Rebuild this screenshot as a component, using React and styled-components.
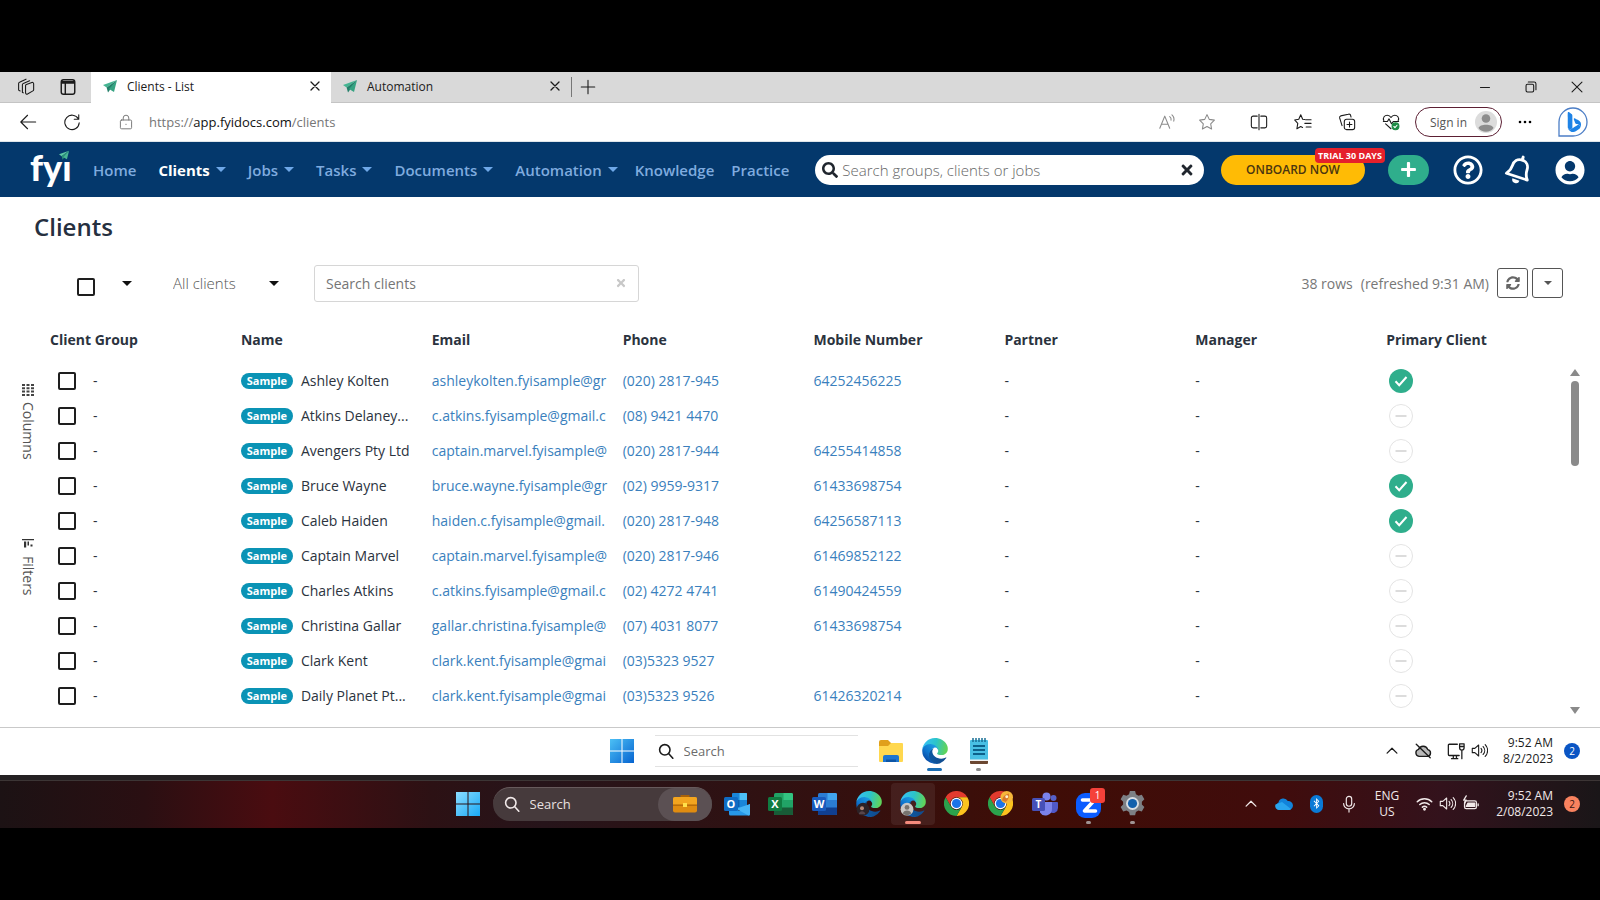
import React from "react";
import styled, { createGlobalStyle, css } from "styled-components";
import { FaSearch, FaTimes, FaPlus, FaRegQuestionCircle, FaUserCircle, FaSyncAlt, FaBluetoothB } from "react-icons/fa";
import { BsBing } from "react-icons/bs";

const Global = createGlobalStyle`
  *, *::before, *::after { box-sizing: border-box; }
  body { margin: 0; background: #000; font-family: "Open Sans", "Noto Sans", sans-serif; font-size: 14px; color: #2b333e; }
  button, input, select { font: inherit; color: inherit; margin: 0; }
  button { background: none; border: 0; padding: 0; cursor: pointer; }
  a { text-decoration: none; color: inherit; }
  svg { display: block; flex: none; }
`;

/* ---------- frame ---------- */
const Frame = styled.div`
  min-height: 100vh;
  padding: 72px 0;
  display: flex;
  flex-direction: column;
  background: #000;
`;

/* ---------- browser chrome ---------- */
const TabStrip = styled.div`
  display: flex;
  height: 31px;
  background: #d9d9d9;
  color: #1b1b1b;
`;
const TabTools = styled.div`
  width: 91px;
  display: flex;
  align-items: center;
  gap: 24px;
  padding-left: 17px;
  border-bottom: 1px solid #c4c4c4;
`;
const Tab = styled.div`
  width: 240px;
  display: flex;
  align-items: center;
  padding: 0 10px 2px 12px;
  font-size: 12px;
  background: ${(p) => (p.$active ? "#fff" : "transparent")};
  border-bottom: 1px solid ${(p) => (p.$active ? "#fff" : "#c4c4c4")};
`;
const TabLabel = styled.button`
  flex: 1;
  display: flex;
  align-items: center;
  gap: 10px;
  text-align: left;
`;
const StripRest = styled.div`
  flex: 1;
  display: flex;
  align-items: center;
  justify-content: space-between;
  border-bottom: 1px solid #c4c4c4;
  padding-right: 14px;
`;
const NewTab = styled.div`
  display: flex;
  align-items: center;
  height: 20px;
  padding-left: 7px;
  border-left: 1px solid #777;
`;
const WindowButtons = styled.div`
  display: flex;
  gap: 28px;
`;
const IconButton = styled.button`
  display: flex;
  align-items: center;
  justify-content: center;
  width: ${(p) => p.$size || 18}px;
  height: ${(p) => p.$size || 18}px;
  color: ${(p) => p.$color || "inherit"};
`;
const AddressBar = styled.div`
  display: flex;
  align-items: center;
  height: 39px;
  padding: 0 12px 0 18px;
  background: #fff;
  color: #1b1b1b;
  border-bottom: 1px solid #dfe5ea;
`;
const NavTools = styled.div`
  display: flex;
  gap: 24px;
`;
const Address = styled.div`
  flex: 1;
  display: flex;
  align-items: center;
  gap: 15px;
  padding-left: 36px;
  font-size: 13px;
  color: #767676;
  b { font-weight: 400; color: #111; }
`;
const PageTools = styled.div`
  display: flex;
  gap: 20px;
  margin-right: 32px;
  color: #8a8a8a;
`;
const BrowserTools = styled.div`
  display: flex;
  align-items: center;
  gap: 24px;
`;
const SignIn = styled.button`
  display: flex;
  align-items: center;
  justify-content: space-between;
  width: 87px;
  height: 30px;
  margin: 0 -10px;
  padding: 0 4px 0 14px;
  border: 1px solid #5c1f33;
  border-radius: 15px;
  font-size: 12px;
  color: #555;
`;

/* ---------- app bar ---------- */
const AppBar = styled.header`
  display: flex;
  align-items: center;
  height: 55px;
  padding: 0 15px 0 30px;
  background: #04386c;
  color: #8cb8ea;
`;
const Menu = styled.nav`
  display: flex;
  align-items: center;
  gap: 17px;
  padding-left: 19px;
`;
const MenuLink = styled.a`
  display: flex;
  align-items: center;
  gap: 6px;
  margin-left: ${(p) => (p.$drop ? 5 : 0)}px;
  font-size: 15px;
  font-weight: ${(p) => (p.$active ? 700 : 600)};
  color: ${(p) => (p.$active ? "#fff" : "#7fabdf")};
`;
const Caret = styled.i`
  display: block;
  width: 0;
  height: 0;
  border: ${(p) => p.$size || 5}px solid transparent;
  border-bottom-width: 0;
  border-top-color: ${(p) => p.$color || "#6fa8e8"};
`;
const GlobalSearch = styled.label`
  flex: 1;
  display: flex;
  align-items: center;
  gap: 4px;
  height: 30px;
  margin-left: 26px;
  padding: 0 9px 0 7px;
  border-radius: 15px;
  background: #fff;
  color: #20262e;
  input {
    flex: 1;
    min-width: 0;
    padding: 0;
    border: 0;
    outline: 0;
    background: none;
    font-size: 15px;
    font-weight: 300;
  }
  input::placeholder { color: #666; opacity: 1; }
`;
const OnboardWrap = styled.div`
  position: relative;
  margin: 0 23px 0 17px;
`;
const Onboard = styled.button`
  width: 144px;
  height: 30px;
  border-radius: 15px;
  background: #ffbb05;
  font-size: 12px;
  font-weight: 600;
  color: #4a3510;
`;
const Trial = styled.span`
  position: absolute;
  right: -20px;
  top: -7px;
  width: 70px;
  height: 15px;
  border-radius: 4px;
  background: #e5202b;
  color: #fff;
  font-size: 9px;
  font-weight: 700;
  line-height: 15px;
  text-align: center;
  white-space: nowrap;
`;
const AddButton = styled.button`
  display: flex;
  align-items: center;
  justify-content: center;
  width: 41px;
  height: 30px;
  margin-right: 24px;
  border-radius: 15px;
  background: #2fae8c;
  color: #fff;
`;
const AppIcons = styled.div`
  display: flex;
  gap: 21px;
`;

/* ---------- page ---------- */
const Page = styled.main`
  flex: 1;
  display: flex;
  flex-direction: column;
  background: #fff;
  border-bottom: 1px solid #c9c9c9;
`;
const Title = styled.h1`
  margin: 0;
  padding: 14px 34px 0;
  font-size: 24px;
  line-height: 32px;
  font-weight: 600;
  color: #263040;
`;
const Toolbar = styled.div`
  display: flex;
  align-items: center;
  height: 38px;
  margin-top: 21px;
  padding: 0 37px 0 77px;
`;
const Check = styled.input.attrs({ type: "checkbox" })`
  appearance: none;
  width: 18px;
  height: 18px;
  border: 2px solid #1e1e1e;
  border-radius: 2px;
  background: #fff;
  flex: none;
  ${(p) => p.$low && css`margin-top: 8px;`}
`;
const SelectMore = styled.button`
  padding: 8px 4px;
  margin: 0 37px 0 23px;
`;
const ViewPicker = styled.label`
  display: flex;
  align-items: center;
  width: 141px;
  select {
    width: 96px;
    appearance: none;
    border: 0;
    padding: 0;
    background: none;
    font-size: 15px;
    font-weight: 300;
    color: #555;
  }
`;
const FilterBox = styled.label`
  display: flex;
  align-items: center;
  width: 325px;
  height: 37px;
  padding: 0 11px;
  border: 1px solid #d6d6d6;
  border-radius: 3px;
  input { flex: 1; min-width: 0; border: 0; outline: 0; padding: 0; background: none; }
  input::placeholder { color: #757575; opacity: 1; }
`;
const Status = styled.div`
  flex: 1;
  display: flex;
  align-items: center;
  justify-content: flex-end;
  gap: 8px;
  color: #777;
`;
const BoxButton = styled.button`
  display: flex;
  align-items: center;
  justify-content: center;
  width: 31px;
  height: 30px;
  border: 1px solid #555;
  border-radius: 3px;
  color: #666;
  & + & { margin-left: -4px; }
`;
const Body = styled.div`
  flex: 1;
  display: flex;
  padding: 13px 19px 13px 0;
`;
const Side = styled.aside`
  width: 42px;
  display: flex;
  flex-direction: column;
  gap: 78px;
  padding: 69px 0 0 18px;
`;
const SideTab = styled.button`
  display: flex;
  flex-direction: column;
  align-items: center;
  gap: 6px;
  width: 20px;
  color: #555;
  span { writing-mode: vertical-rl; line-height: 20px; font-size: 14px; }
`;
const Table = styled.table`
  flex: 1;
  width: 100%;
  table-layout: fixed;
  border-collapse: collapse;
  align-self: flex-start;
`;
const Th = styled.th`
  height: 48px;
  padding: 0 8px;
  text-align: left;
  font-weight: 700;
  color: #2b333e;
`;
const Td = styled.td`
  height: 35px;
  padding: 0 8px;
  overflow: hidden;
  white-space: nowrap;
  a { color: #3a7fbd; }
`;
const CellFlow = styled.div`
  display: flex;
  align-items: center;
  gap: ${(p) => p.$gap || 8}px;
  padding-left: ${(p) => p.$inset || 0}px;
`;
const Tag = styled.span`
  width: 52px;
  height: 16px;
  border-radius: 8px;
  background: #0a93b5;
  color: #fff;
  font-size: 11px;
  font-weight: 700;
  line-height: 15px;
  text-align: center;
  flex: none;
`;
const Scroller = styled.div`
  width: 12px;
  display: flex;
  flex-direction: column;
  align-items: center;
  justify-content: space-between;
  padding-top: 54px;
`;
const Thumb = styled.div`
  width: 8px;
  height: 85px;
  margin: 4px auto 0;
  border-radius: 4px;
  background: #8a8a8a;
`;

/* ---------- taskbars ---------- */
const Taskbar = styled.footer`
  display: grid;
  grid-template-columns: 1fr auto 1fr;
  align-items: center;
  height: 47px;
  padding-bottom: 2px;
  background: #fff;
  color: #1b1b1b;
  ${(p) =>
    p.$dark &&
    css`
      height: 48px;
      border-top: 1px solid #3c3535;
      color: #f1e9e9;
      background: linear-gradient(90deg, #1c1214 0%, #2a0f12 9%, #4a0c10 17%, #2c1114 27%, #26141a 34%, #33100f 52%, #3f0d06 65%, #400c0c 80%, #33121c 90%, #1a1618 100%);
    `}
`;
const Divider = styled.div`
  height: 5px;
  background: #242122;
`;
const Apps = styled.div`
  display: flex;
  align-items: center;
  grid-column: 2;
`;
const App_ = styled.button`
  position: relative;
  display: flex;
  align-items: center;
  justify-content: center;
  width: 44px;
  height: 42px;
  ${(p) => p.$lit && css`background: #ffffff12; border-radius: 4px;`}
  &::after {
    content: "";
    display: ${(p) => (p.$mark ? "block" : "none")};
    position: absolute;
    bottom: 1px;
    width: ${(p) => p.$markWidth || 5}px;
    height: 3px;
    border-radius: 2px;
    background: ${(p) => p.$mark};
  }
`;
const TaskSearch = styled.label`
  display: flex;
  align-items: center;
  gap: 10px;
  width: 203px;
  height: 32px;
  margin: 0 11px 0 11px;
  border: 1px solid #e2e2e2;
  border-width: 1px 0;
  padding-left: 3px;
  input { flex: 1; min-width: 0; border: 0; padding: 0; outline: 0; background: none; font-size: 13px; }
  input::placeholder { color: #6b6b6b; opacity: 1; }
  ${(p) =>
    p.$dark &&
    css`
      width: 219px;
      height: 34px;
      margin: 0 3px;
      padding: 0 0 0 11px;
      border: 0;
      border-top: 1px solid #675a5c;
      border-radius: 17px;
      background: #463a3c;
      input::placeholder { color: #e8e0e0; }
    `}
`;
const Bag = styled.span`
  display: flex;
  align-items: center;
  justify-content: center;
  width: 54px;
  height: 33px;
  border-radius: 17px;
  background: #5b5053;
`;
const Tray = styled.div`
  display: flex;
  align-items: center;
  justify-content: flex-end;
  gap: ${(p) => p.$gap}px;
  padding-right: 20px;
`;
const TrayGroup = styled.div`
  display: flex;
  align-items: center;
  gap: ${(p) => p.$gap || 6}px;
`;
const Clock = styled.div`
  font-size: 12px;
  line-height: 16px;
  text-align: ${(p) => p.$align || "right"};
`;
const Count = styled.span`
  width: 16px;
  height: 16px;
  border-radius: 8px;
  background: ${(p) => p.$bg};
  color: ${(p) => p.$fg};
  font-size: 10px;
  line-height: 16px;
  text-align: center;
`;

/* ---------- drawings ---------- */
const Line = ({ size = 18, w = 1.2, children, box = 20 }) => (
  <svg width={size} height={size} viewBox={`0 0 ${box} ${box}`} fill="none" stroke="currentColor" strokeWidth={w} strokeLinecap="round" strokeLinejoin="round">
    {children}
  </svg>
);
const Plane = ({ size = 14 }) => (
  <svg width={size} height={size} viewBox="0 0 14 14">
    <path d="M14 1 0 6l3.600 2.600L14 1z" fill="#45b592" />
    <path d="M14 1 3.600 8.400 5 13.500l2.200-3L14 1z" fill="#237f69" />
    <path d="M14 1 6 10l5 3L14 1z" fill="#36a382" />
  </svg>
);
const Close = ({ size = 12 }) => (
  <Line size={size} box={12} w={1.3}><path d="M2 2l8 8M10 2l-8 8" /></Line>
);
const Logo = () => (
  <svg width="44" height="52" viewBox="0 0 44 52" role="img" aria-label="fyi">
    <text x="0" y="37" fill="#fff" fontFamily="Lato, sans-serif" fontWeight="900" fontSize="36">fyı</text>
    <g transform="translate(29 6) scale(.72)">
      <path d="M14 1 0 6l3.600 2.600L14 1z" fill="#5fc7a4" />
      <path d="M14 1 3.600 8.400 5 13.500l2.200-3L14 1z" fill="#2a8f78" />
      <path d="M14 1 6 10l5 3L14 1z" fill="#49b594" />
    </g>
  </svg>
);
const Bell = () => (
  <svg width="30" height="30" viewBox="0 0 30 30" fill="none">
    <g transform="rotate(18 15 15)">
      <path d="M15 4.500c-5 0-7.600 3.600-7.600 8 0 5.600-1.800 7.300-3.400 9.500h22c-1.600-2.200-3.400-3.900-3.400-9.500 0-4.400-2.600-8-7.600-8z" stroke="#fff" strokeWidth="2.800" strokeLinejoin="round" />
      <path d="M15 1.500v3" stroke="#fff" strokeWidth="3" strokeLinecap="round" />
      <path d="M11.300 25h7.400a3.700 3.700 0 0 1-7.400 0z" fill="#fff" />
    </g>
  </svg>
);
const Windows = ({ dark }) => (
  <svg width="24" height="24" viewBox="0 0 24 24">
    <defs>
      <linearGradient id={dark ? "wd" : "wl"} x1="0" y1="0" x2="24" y2="24" gradientUnits="userSpaceOnUse">
        <stop offset="0" stopColor={dark ? "#8bdcff" : "#4cc0f5"} />
        <stop offset="1" stopColor={dark ? "#19a9f5" : "#0663d0"} />
      </linearGradient>
    </defs>
    <path d="M0 0h11.500v11.500H0zM12.500 0H24v11.500H12.500zM0 12.500h11.500V24H0zM12.500 12.500H24V24H12.500z" fill={`url(#${dark ? "wd" : "wl"})`} />
  </svg>
);
const Edge = ({ avatar }) => (
  <svg width="26" height="26" viewBox="0 0 256 260">
    <defs>
      <linearGradient id="ea" x1="63" y1="178" x2="241" y2="178" gradientUnits="userSpaceOnUse"><stop offset="0" stopColor="#0c59a4" /><stop offset="1" stopColor="#114a8b" /></linearGradient>
      <linearGradient id="eb" x1="158" y1="100" x2="46" y2="222" gradientUnits="userSpaceOnUse"><stop offset="0" stopColor="#1b9de2" /><stop offset=".6" stopColor="#0f76cf" /><stop offset="1" stopColor="#0a4fa8" /></linearGradient>
      <linearGradient id="ec" x1="20" y1="60" x2="240" y2="110" gradientUnits="userSpaceOnUse"><stop offset="0" stopColor="#35c1f1" /><stop offset=".5" stopColor="#2cc4c9" /><stop offset="1" stopColor="#5fd35b" /></linearGradient>
    </defs>
    <path fill="url(#ea)" d="M235.680 195.460a93.730 93.730 0 0 1-10.540 4.710 101.870 101.870 0 0 1-35.900 6.460c-47.320 0-88.540-32.550-88.540-74.320A31.480 31.480 0 0 1 117.130 105c-42.800 1.800-53.800 46.400-53.800 72.530 0 73.880 68.090 81.370 82.760 81.370 7.910 0 19.840-2.300 27-4.560l1.310-.44a128.340 128.340 0 0 0 66.600-52.800 4 4 0 0 0-5.320-5.640z" />
    <path fill="url(#eb)" d="M105.730 241.420a79.200 79.200 0 0 1-22.740-21.340 80.720 80.720 0 0 1 29.530-120c3.120-1.470 8.450-4.130 15.540-4a32.350 32.350 0 0 1 25.690 13 31.880 31.880 0 0 1 6.360 18.660c0-.21 24.460-79.600-80-79.600-43.900 0-80 41.660-80 78.210a130.150 130.150 0 0 0 12.110 56 128 128 0 0 0 156.380 67.110 75.550 75.550 0 0 1-62.780-8z" />
    <path fill="url(#ec)" d="M152.330 148.860c-.81 1.050-3.300 2.500-3.300 5.660 0 2.610 1.700 5.120 4.720 7.230 14.380 10 41.490 8.680 41.560 8.680a59.560 59.560 0 0 0 30.270-8.350 61.380 61.380 0 0 0 30.430-52.880c.26-22.410-8-37.310-11.340-43.910C223.460 23.840 177.720 0 128 0A128 128 0 0 0 0 126.200c.48-36.540 36.800-66.050 80-66.050 3.500 0 23.460.34 42 10.070 16.340 8.580 24.900 18.940 30.850 29.210 6.180 10.670 7.280 24.150 7.280 29.520 0 5.370-2.740 13.330-7.800 19.910z" />
    {avatar === "photo" && (
      <g><circle cx="68" cy="182" r="64" fill="#2c2226" /><circle cx="58" cy="172" r="20" fill="#b58a78" /><path d="M26 232c4-40 60-40 66 0z" fill="#57454b" /></g>
    )}
    {avatar === "person" && (
      <g><circle cx="68" cy="182" r="64" fill="#c9c6c4" /><circle cx="68" cy="164" r="24" fill="#77736f" /><path d="M26 226c6-42 78-42 84 0a64 64 0 0 1-84 0z" fill="#77736f" /></g>
    )}
  </svg>
);
const Chrome = ({ avatar }) => (
  <svg width="25" height="25" viewBox="0 0 24 24">
    <path fill="#e33b2e" d="M12 6h10.400A12 12 0 0 0 1.600 6l5.200 9A6 6 0 0 1 12 6z" />
    <path fill="#fcc31e" d="M22.400 6H12a6 6 0 0 1 5.200 9L12 24A12 12 0 0 0 22.400 6z" />
    <path fill="#2ba24c" d="M17.200 15a6 6 0 0 1-10.400 0L1.600 6A12 12 0 0 0 12 24z" />
    <circle cx="12" cy="12" r="5.600" fill="#fff" />
    <circle cx="12" cy="12" r="4.400" fill="#1a73e8" />
    {avatar && (
      <g><circle cx="18" cy="6" r="6" fill="#f6b73a" /><path d="M13.500 9c1-4 3-5.500 6.500-6.500.5 3-.5 6.500-3 8z" fill="#d8792b" /><circle cx="18" cy="5.500" r="1.400" fill="#fff3d0" /></g>
    )}
  </svg>
);
const Office = ({ letter, light, mid, deep, plate }) => (
  <svg width="26" height="24" viewBox="0 0 26 24">
    <rect x="6" y="1" width="19" height="22" rx="1.500" fill={mid} />
    <path d="M15.500 1H23.500a1.500 1.500 0 0 1 1.500 1.500V8h-9.500z" fill={light} />
    <path d="M6 15.500h19v6a1.500 1.500 0 0 1-1.500 1.500h-16A1.500 1.500 0 0 1 6 21.500z" fill={deep} />
    <rect x="0" y="5" width="14" height="14" rx="1.500" fill={plate} />
    <text x="7" y="16" textAnchor="middle" fontFamily="Open Sans, sans-serif" fontWeight="700" fontSize="11" fill="#fff">{letter}</text>
  </svg>
);
const Outlook = () => (
  <svg width="26" height="24" viewBox="0 0 26 24">
    <rect x="8" y="1" width="15" height="15" rx="1" fill="#1a86d9" />
    <path d="M15.500 1H22a1 1 0 0 1 1 1v6h-7.500z" fill="#4cc0f7" />
    <path d="M8 8h7.500v7H8z" fill="#0d5fb0" />
    <path d="M5 13l10.500 6L26 12v10a1.500 1.500 0 0 1-1.500 1.500h-18A1.500 1.500 0 0 1 5 22z" fill="#2798e8" />
    <path d="M26 12v10a1.500 1.500 0 0 1-1.500 1.500L12 16.800z" fill="#46b4f5" />
    <rect x="0" y="5" width="14" height="14" rx="1.500" fill="#0f6cc4" />
    <text x="7" y="16" textAnchor="middle" fontFamily="Open Sans, sans-serif" fontWeight="700" fontSize="11" fill="#fff">O</text>
  </svg>
);
const Teams = () => (
  <svg width="26" height="24" viewBox="0 0 26 24">
    <circle cx="21.500" cy="6" r="3" fill="#5660c8" />
    <circle cx="14.500" cy="4.500" r="4" fill="#7b83eb" />
    <path d="M17 10h8a1 1 0 0 1 1 1v5a5 5 0 0 1-8 4z" fill="#5059c9" />
    <path d="M8 10h12v7a6.500 6.500 0 0 1-12 3.500z" fill="#7b83eb" />
    <rect x="0" y="6" width="13" height="13" rx="1.500" fill="#4650b8" />
    <text x="6.500" y="16" textAnchor="middle" fontFamily="Open Sans, sans-serif" fontWeight="700" fontSize="10" fill="#fff">T</text>
  </svg>
);
const Zoom = () => (
  <svg width="32" height="32" viewBox="0 0 32 32">
    <rect x="3" y="5" width="25" height="25" rx="9" fill="#0b5cff" />
    <path d="M9.500 12h12l-10 11h11" fill="none" stroke="#fff" strokeWidth="3.600" strokeLinejoin="round" strokeLinecap="round" />
    <rect x="17" y="0" width="15" height="15" rx="3" fill="#f5413a" />
    <text x="24.500" y="11" textAnchor="middle" fontFamily="Open Sans, sans-serif" fontSize="10" fill="#fff">1</text>
  </svg>
);
const Gear = () => (
  <svg width="25" height="25" viewBox="0 0 24 24">
    <path fill="#7d8085" d="M9.500 0h5l.8 3.200 2.400 1.400 3.200-1 2.500 4.300-2.400 2.300v2.800l2.400 2.300-2.500 4.300-3.200-.9-2.400 1.400-.8 3.200h-5l-.8-3.200-2.400-1.400-3.200.9L.6 15.300 3 13v-2.800L.6 7.900l2.500-4.300 3.200 1 2.400-1.400z" />
    <circle cx="12" cy="12" r="6.200" fill="#d8dde3" />
    <circle cx="12" cy="12" r="4.400" fill="#1260ac" />
  </svg>
);
const Folder = () => (
  <svg width="26" height="24" viewBox="0 0 26 24">
    <path d="M1 3a2 2 0 0 1 2-2h7l3 3v6H1z" fill="#e0a01b" />
    <path d="M1 7h9l3-3h11a1 1 0 0 1 1 1v17a1 1 0 0 1-1 1H2a1 1 0 0 1-1-1z" fill="#ffd84f" />
    <path d="M5 23v-5a2 2 0 0 1 2-2h12a2 2 0 0 1 2 2v5z" fill="#1c75d0" />
    <path d="M8 20.500h10V23H8z" fill="#0d55a5" />
  </svg>
);
const Notepad = () => (
  <svg width="20" height="26" viewBox="0 0 20 26">
    <rect x="1" y="2" width="18" height="22" rx="1" fill="#48bfe4" />
    <path d="M1 22.500h18V25a1 1 0 0 1-1 1H2a1 1 0 0 1-1-1z" fill="#6b4731" />
    <path d="M1 21.500h18v1.500H1z" fill="#f1f1f1" />
    <path d="M4 0v4M7 0v4M10 0v4M13 0v4M16 0v4" stroke="#176f95" strokeWidth="1.500" />
    <path d="M4 8h12M4 12h12M4 16h12" stroke="#0c608a" strokeWidth="1.800" />
  </svg>
);
const Briefcase = () => (
  <svg width="24" height="18" viewBox="0 0 24 18">
    <path d="M8.500 3V1h7v2" fill="none" stroke="#a96209" strokeWidth="2" />
    <rect x="0" y="2" width="24" height="15.500" rx="2" fill="#e08c10" />
    <path d="M0 4a2 2 0 0 1 2-2h20a2 2 0 0 1 2 2v5.500H0z" fill="#f3a51f" />
    <path d="M0 9.500h24v1.500H0z" fill="#b96d08" />
    <rect x="10" y="8" width="4" height="4" fill="#ffe04a" />
  </svg>
);
const Speaker = () => (
  <Line size={17} w={1.3}><path d="M1.500 7.500v5h3L9 16.500v-13L4.500 7.500zM11.800 7.500a4 4 0 0 1 0 5M14.300 5.300a7 7 0 0 1 0 9.400M16.700 3a10 10 0 0 1 0 14" /></Line>
);
const ChevronUp = () => <Line size={14} w={1.8}><path d="M3 13l7-7 7 7" /></Line>;
const Magnifier = () => <Line size={16} w={2}><circle cx="8.500" cy="8.500" r="6.500" /><path d="M13.500 13.500L18.500 19" /></Line>;
const StarPath = "M10 1.800l2.500 5.300 5.700.8-4.100 4.100 1 5.800-5.100-2.800-5.100 2.800 1-5.800L1.800 7.900l5.700-.8z";

const Ticked = () => (
  <svg width="24" height="24" viewBox="0 0 24 24" role="img" aria-label="Primary">
    <circle cx="12" cy="12" r="12" fill="#2fae8c" />
    <path d="M6.500 12.300l3.700 3.900L17.500 8" fill="none" stroke="#fff" strokeWidth="2" />
  </svg>
);
const Unticked = () => (
  <svg width="24" height="24" viewBox="0 0 24 24" role="img" aria-label="Not primary">
    <circle cx="12" cy="12" r="11.500" fill="#fff" stroke="#e4e4e4" />
    <path d="M6.500 12h11" stroke="#d0d0d0" strokeWidth="1.500" />
  </svg>
);

/* ---------- data ---------- */
const menu = [
  ["Home", false],
  ["Clients", true],
  ["Jobs", true],
  ["Tasks", true],
  ["Documents", true],
  ["Automation", true],
  ["Knowledge", false],
  ["Practice", false],
];
const columns = ["Client Group", "Name", "Email", "Phone", "Mobile Number", "Partner", "Manager", "Primary Client"];
const clients = [
  ["Ashley Kolten", "ashleykolten.fyisample@gr", "(020) 2817-945", "64252456225", true],
  ["Atkins Delaney...", "c.atkins.fyisample@gmail.c", "(08) 9421 4470", "", false],
  ["Avengers Pty Ltd", "captain.marvel.fyisample@", "(020) 2817-944", "64255414858", false],
  ["Bruce Wayne", "bruce.wayne.fyisample@gr", "(02) 9959-9317", "61433698754", true],
  ["Caleb Haiden", "haiden.c.fyisample@gmail.", "(020) 2817-948", "64256587113", true],
  ["Captain Marvel", "captain.marvel.fyisample@", "(020) 2817-946", "61469852122", false],
  ["Charles Atkins", "c.atkins.fyisample@gmail.c", "(02) 4272 4741", "61490424559", false],
  ["Christina Gallar", "gallar.christina.fyisample@", "(07) 4031 8077", "61433698754", false],
  ["Clark Kent", "clark.kent.fyisample@gmai", "(03)5323 9527", "", false],
  ["Daily Planet Pt...", "clark.kent.fyisample@gmai", "(03)5323 9526", "61426320214", false],
];

function Browser() {
  return (
    <>
      <TabStrip>
        <TabTools>
          <IconButton aria-label="Workspaces"><Line><path d="M9.500 8.500a1.500 1.500 0 0 1 1-1.300l6-2.200a1.500 1.500 0 0 1 2 1.400V13a1.500 1.500 0 0 1-.8 1.300l-6 3.500a1.500 1.500 0 0 1-2.200-1.300zM7 16.500l-1-.5V7.500A1.500 1.500 0 0 1 7 6l7-3M3.500 14.500L1.800 13.500V6a1.500 1.500 0 0 1 1-1.400L10 1.300" /></Line></IconButton>
          <IconButton aria-label="Tab actions"><Line w={1.6}><rect x="2.500" y="2" width="15" height="16" rx="2.500" /><path d="M3 4h14M3 5.500h14M7 6v12" /></Line></IconButton>
        </TabTools>
        <Tab $active>
          <TabLabel><Plane /> Clients - List</TabLabel>
          <IconButton aria-label="Close tab" $size={12}><Close /></IconButton>
        </Tab>
        <Tab>
          <TabLabel><Plane /> Automation</TabLabel>
          <IconButton aria-label="Close tab" $size={12}><Close /></IconButton>
        </Tab>
        <StripRest>
          <NewTab><IconButton aria-label="New tab"><Line><path d="M10 2.500v15M2.500 10h15" /></Line></IconButton></NewTab>
          <WindowButtons>
            <IconButton aria-label="Minimise"><Line><path d="M5 10.500h10" /></Line></IconButton>
            <IconButton aria-label="Restore"><Line><rect x="4.500" y="7" width="8.500" height="8.500" rx="1.500" /><path d="M7 4.500h6.500a2 2 0 0 1 2 2V13" /></Line></IconButton>
            <IconButton aria-label="Close"><Line><path d="M4.500 4.500l11 11M15.500 4.500l-11 11" /></Line></IconButton>
          </WindowButtons>
        </StripRest>
      </TabStrip>
      <AddressBar>
        <NavTools>
          <IconButton aria-label="Back" $size={20}><Line><path d="M9.500 2.500L2 10l7.500 7.500M2 10h16.500" /></Line></IconButton>
          <IconButton aria-label="Reload" $size={20}><Line><path d="M17 6.500A8 8 0 1 0 18 11M17.500 2v5h-5" /></Line></IconButton>
        </NavTools>
        <Address>
          <Line size={16}><rect x="3" y="7.500" width="14" height="11" rx="1.500" /><path d="M6.500 7.500V5a3.500 3.500 0 0 1 7 0v2.500M10 12.800v.4" /></Line>
          <span>https://<b>app.fyidocs.com</b>/clients</span>
        </Address>
        <PageTools>
          <IconButton aria-label="Read aloud" $size={20}><Line><path d="M2 17L7.500 3.500 13 17M4 12.500h7M13 4a4 4 0 0 1 1.500 4M15.500 2a7 7 0 0 1 2 7" /></Line></IconButton>
          <IconButton aria-label="Add to favourites" $size={20}><Line><path d={StarPath} /></Line></IconButton>
        </PageTools>
        <BrowserTools>
          <IconButton aria-label="Split screen" $size={20}><Line><path d="M8 3.500H3.500a2 2 0 0 0-2 2v9a2 2 0 0 0 2 2H8M12 3.500h4.500a2 2 0 0 1 2 2v9a2 2 0 0 1-2 2H12M10 1.500v17" /></Line></IconButton>
          <IconButton aria-label="Favourites" $size={20}><Line><path d="M12 7.200L9.600 7 7.500 2 5.300 7l-4.600.7 3.500 3.800-1 6 4.300-2.500 2 1M13 7.500h6M12 11.500h7M13.500 15.500H19" /></Line></IconButton>
          <IconButton aria-label="Collections" $size={20}><Line><rect x="7" y="7" width="11.500" height="11.500" rx="2.500" /><path d="M12.800 10v5.500M10 12.800h5.500M4.500 14L1.800 5.500A2 2 0 0 1 3 3.200l8.500-1.900A2 2 0 0 1 14 2.700l.5 1.800" /></Line></IconButton>
          <IconButton aria-label="Browser essentials" $size={20}>
            <Line><path d="M2 8.500C.5 5 3 2.500 5.800 2.500c2 0 3.300 1 4.200 2.500.9-1.500 2.200-2.500 4.200-2.500 2.800 0 5.300 2.500 3.800 6M1.500 9.500H6l1.800-3 2.700 5.500 2-2.500h6M4 12l6 5.500" /><circle cx="15" cy="14.800" r="3.800" fill="#1c8a43" stroke="#1c8a43" /><path d="M13.200 15l1.200 1.200 2.300-2.600" stroke="#fff" /></Line>
          </IconButton>
          <SignIn>
            Sign in
            <svg width="22" height="22" viewBox="0 0 22 22"><circle cx="11" cy="11" r="11" fill="#dcdcdc" /><circle cx="11" cy="7.500" r="4.300" fill="#8d8d8d" /><path d="M3.500 17c1-4.500 14-4.500 15 0-3 5-12 5-15 0z" fill="#8d8d8d" /></svg>
          </SignIn>
          <IconButton aria-label="More"><svg width="14" height="4" viewBox="0 0 14 4"><circle cx="2" cy="2" r="1.300" /><circle cx="7" cy="2" r="1.300" /><circle cx="12" cy="2" r="1.300" /></svg></IconButton>
          <IconButton aria-label="Bing chat" $size={30} $color="#1f83e6">
            <svg width="30" height="30" viewBox="0 0 30 30">
              <path d="M1 29V15A14 14 0 1 1 15 29z" fill="#fff" stroke="#4c7ec6" strokeWidth="1.300" />
              <BsBing x="6" y="5" size={20} />
            </svg>
          </IconButton>
        </BrowserTools>
      </AddressBar>
    </>
  );
}

function Header() {
  return (
    <AppBar>
      <Logo />
      <Menu>
        {menu.map(([label, drop]) => (
          <MenuLink key={label} href="#" $drop={drop} $active={label === "Clients"}>
            {label}
            {drop && <Caret />}
          </MenuLink>
        ))}
      </Menu>
      <GlobalSearch>
        <FaSearch size={16} />
        <input aria-label="Search groups, clients or jobs" placeholder="Search groups, clients or jobs" />
        <IconButton aria-label="Clear search" $size={16}><FaTimes size={16} /></IconButton>
      </GlobalSearch>
      <OnboardWrap>
        <Onboard>ONBOARD NOW</Onboard>
        <Trial>TRIAL 30 DAYS</Trial>
      </OnboardWrap>
      <AddButton aria-label="Add"><FaPlus size={17} /></AddButton>
      <AppIcons>
        <IconButton aria-label="Help" $size={30} $color="#fff"><FaRegQuestionCircle size={30} /></IconButton>
        <IconButton aria-label="Notifications" $size={30}><Bell /></IconButton>
        <IconButton aria-label="Account" $size={30} $color="#fff"><FaUserCircle size={30} /></IconButton>
      </AppIcons>
    </AppBar>
  );
}

function ClientsTable() {
  return (
    <Table>
      <thead>
        <tr>{columns.map((c) => <Th key={c} scope="col">{c}</Th>)}</tr>
      </thead>
      <tbody>
        {clients.map(([name, email, phone, mobile, primary]) => (
          <tr key={name}>
            <Td><CellFlow $inset={8} $gap={17}><Check aria-label={`Select ${name}`} /><span>-</span></CellFlow></Td>
            <Td><CellFlow><Tag>Sample</Tag><span>{name}</span></CellFlow></Td>
            <Td><a href="#">{email}</a></Td>
            <Td><a href="#">{phone}</a></Td>
            <Td>{mobile && <a href="#">{mobile}</a>}</Td>
            <Td>-</Td>
            <Td>-</Td>
            <Td><CellFlow $inset={3}>{primary ? <Ticked /> : <Unticked />}</CellFlow></Td>
          </tr>
        ))}
      </tbody>
    </Table>
  );
}

function ClientsPage() {
  return (
    <Page>
      <Title>Clients</Title>
      <Toolbar>
        <Check $low aria-label="Select all" />
        <SelectMore aria-label="Selection options"><Caret $color="#111" /></SelectMore>
        <ViewPicker>
          <select aria-label="View" defaultValue="all"><option value="all">All clients</option></select>
          <Caret $color="#111" />
        </ViewPicker>
        <FilterBox>
          <input aria-label="Search clients" placeholder="Search clients" />
          <IconButton aria-label="Clear" $size={12} $color="#c8c8c8"><FaTimes size={12} /></IconButton>
        </FilterBox>
        <Status>
          <span>38 rows</span>
          <span>(refreshed 9:31 AM)</span>
          <BoxButton aria-label="Refresh"><FaSyncAlt size={14} /></BoxButton>
          <BoxButton aria-label="More options"><Caret $size={4} $color="#555" /></BoxButton>
        </Status>
      </Toolbar>
      <Body>
        <Side>
          <SideTab>
            <svg width="12" height="12" viewBox="0 0 12 12" fill="#444"><path d="M0 0h3v2H0zM4.500 0h3v2h-3zM9 0h3v2H9zM0 3.300h3v2H0zM4.500 3.300h3v2h-3zM9 3.300h3v2H9zM0 6.600h3v2H0zM4.500 6.600h3v2h-3zM9 6.600h3v2H9zM0 10h3v2H0zM4.500 10h3v2h-3zM9 10h3v2H9z" /></svg>
            <span>Columns</span>
          </SideTab>
          <SideTab>
            <svg width="12" height="12" viewBox="0 0 12 12" fill="#333"><path d="M0 1h12v1.300H0zM2 3.500h2.200v6H2zM5.500 3.500h1.500v4H5.500zM8.500 6.500h2v2h-2z" /></svg>
            <span>Filters</span>
          </SideTab>
        </Side>
        <ClientsTable />
        <Scroller>
          <div>
            <svg width="10" height="8" viewBox="0 0 10 8"><path d="M5 0l5 7H0z" fill="#8a8a8a" /></svg>
            <Thumb />
          </div>
          <svg width="10" height="8" viewBox="0 0 10 8"><path d="M5 8l5-7H0z" fill="#8a8a8a" /></svg>
        </Scroller>
      </Body>
    </Page>
  );
}

function RemoteTaskbar() {
  return (
    <Taskbar>
      <Apps>
        <App_ aria-label="Start"><Windows /></App_>
        <TaskSearch><Magnifier /><input aria-label="Search" placeholder="Search" /></TaskSearch>
        <App_ aria-label="File Explorer"><Folder /></App_>
        <App_ aria-label="Edge" $mark="#1a6fb5" $markWidth={15}><Edge /></App_>
        <App_ aria-label="Notepad" $mark="#8a8a8a"><Notepad /></App_>
      </Apps>
      <Tray $gap={15}>
        <ChevronUp />
        <Line size={18} w={1.5}><path d="M5.500 16a4 4 0 0 1-.5-7.800 5.500 5.500 0 0 1 10.300.3A3.800 3.800 0 0 1 15 16z" fill="#b9b9b9" /><path d="M2.500 2.500l15.500 15" /></Line>
        <TrayGroup>
          <Line size={18} w={1.4}><path d="M11.500 2.500H2.500a1 1 0 0 0-1 1v10.500a1 1 0 0 0 1 1h11M5 18.500h7M7 15v3.500M10.500 15v3.500M16.500 9.500v9M14 2h5v4.500a2.500 2.500 0 0 1-5 0zM14 5h5" /></Line>
          <Speaker />
        </TrayGroup>
        <TrayGroup $gap={11}>
          <Clock>9:52 AM<br />8/2/2023</Clock>
          <Count $bg="#0a55c4" $fg="#fff">2</Count>
        </TrayGroup>
      </Tray>
    </Taskbar>
  );
}

function HostTaskbar() {
  return (
    <Taskbar $dark>
      <Apps>
        <App_ aria-label="Start"><Windows dark /></App_>
        <TaskSearch $dark>
          <Magnifier />
          <input aria-label="Search this computer" placeholder="Search" />
          <Bag><Briefcase /></Bag>
        </TaskSearch>
        <App_ aria-label="Outlook"><Outlook /></App_>
        <App_ aria-label="Excel"><Office letter="X" light="#33c481" mid="#21a366" deep="#185c37" plate="#107c41" /></App_>
        <App_ aria-label="Word"><Office letter="W" light="#41a5ee" mid="#2b7cd3" deep="#103f91" plate="#185abd" /></App_>
        <App_ aria-label="Edge, work"><Edge avatar="photo" /></App_>
        <App_ aria-label="Edge, personal" $lit $mark="#f58a7c" $markWidth={16}><Edge avatar="person" /></App_>
        <App_ aria-label="Chrome"><Chrome /></App_>
        <App_ aria-label="Chrome, profile"><Chrome avatar /></App_>
        <App_ aria-label="Teams"><Teams /></App_>
        <App_ aria-label="Zoom" $mark="#a09494"><Zoom /></App_>
        <App_ aria-label="Settings" $mark="#a09494"><Gear /></App_>
      </Apps>
      <Tray $gap={17}>
        <ChevronUp />
        <svg width="18" height="12" viewBox="0 0 18 12"><path d="M4 12a4 4 0 0 1-.5-7.500A5 5 0 0 1 12.800 3 4.500 4.500 0 0 1 14 12z" fill="#1283da" /><path d="M4 12a4 4 0 0 1-3.500-5.500L7 4l9 7a4 4 0 0 1-2 1z" fill="#2aa5ee" /></svg>
        <svg width="13" height="18" viewBox="0 0 13 18"><rect width="13" height="18" rx="6.500" fill="#0a7ad6" /><g color="#fff"><FaBluetoothB x="1" y="3" size={11} /></g></svg>
        <Line size={18} w={1.3}><rect x="7" y="1.500" width="6" height="11" rx="3" /><path d="M4 9.500a6 6 0 0 0 12 0M10 15.500v3.500" /></Line>
        <Clock $align="center">ENG<br />US</Clock>
        <TrayGroup>
          <Line size={17} w={1.8}><path d="M1.500 8a12 12 0 0 1 17 0M4.500 11.200a8 8 0 0 1 11 0M7.500 14.300a4 4 0 0 1 5 0" /><circle cx="10" cy="16.800" r=".8" fill="currentColor" /></Line>
          <Speaker />
          <Line size={17} w={1.5}><rect x="3" y="7" width="14" height="9" rx="2" /><path d="M7 9.500h8v4H5z" fill="currentColor" /><path d="M19 10.500v2M5 1L2 6h3L3.500 9.500" /></Line>
        </TrayGroup>
        <TrayGroup $gap={11}>
          <Clock>9:52 AM<br />2/08/2023</Clock>
          <Count $bg="#f9825f" $fg="#3a1410">2</Count>
        </TrayGroup>
      </Tray>
    </Taskbar>
  );
}

export default function App() {
  return (
    <Frame>
      <Global />
      <Browser />
      <Header />
      <ClientsPage />
      <RemoteTaskbar />
      <Divider />
      <HostTaskbar />
    </Frame>
  );
}
